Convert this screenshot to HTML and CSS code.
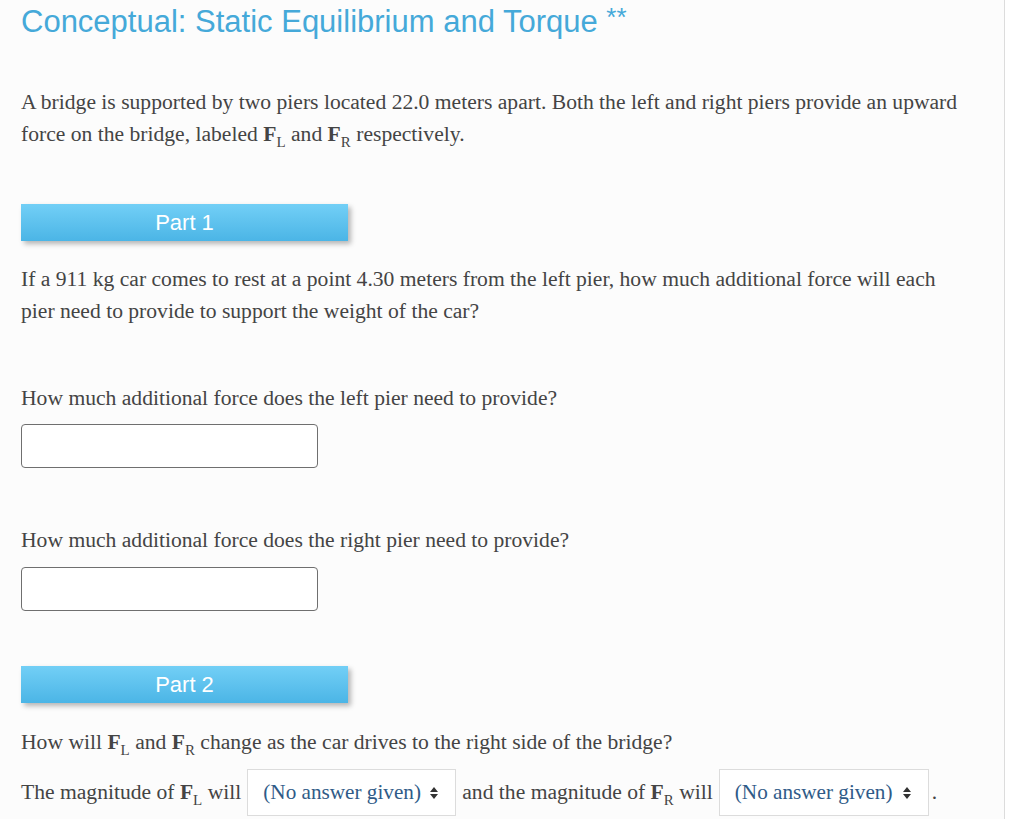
FILE: index.html
```html
<!DOCTYPE html>
<html>
<head>
<meta charset="utf-8">
<link rel="stylesheet" href="styles.css">
</head>
<body>
<div class="page">
  <h1 class="title">Conceptual: Static Equilibrium and Torque <span class="stars">**</span></h1>
  <p class="intro">A bridge is supported by two piers located 22.0 meters apart. Both the left and right piers provide an upward force on the bridge, labeled <b class="vec">F</b><span class="sub">L</span> and <b class="vec">F</b><span class="sub">R</span> respectively.</p>

  <div class="part part1">Part 1</div>
  <p class="q1">If a 911 kg car comes to rest at a point 4.30 meters from the left pier, how much additional force will each pier need to provide to support the weight of the car?</p>

  <p class="q-left">How much additional force does the left pier need to provide?</p>
  <div class="answer a-left"></div>

  <p class="q-right">How much additional force does the right pier need to provide?</p>
  <div class="answer a-right"></div>

  <div class="part part2">Part 2</div>
  <p class="q2">How will <b class="vec">F</b><span class="sub">L</span> and <b class="vec">F</b><span class="sub">R</span> change as the car drives to the right side of the bridge?</p>

  <div class="fill">
    <span class="txt">The magnitude of <b class="vec">F</b><span class="sub">L</span> will</span>
    <div class="select s1"><span>(No answer given)</span><svg class="arrows" width="10" height="14" viewBox="0 0 10 14"><path d="M5 1 L9 6 L1 6 Z M1 8 L9 8 L5 13 Z" fill="#333"/></svg></div>
    <span class="txt">and the magnitude of <b class="vec">F</b><span class="sub">R</span> will</span>
    <div class="select s2"><span>(No answer given)</span><svg class="arrows" width="10" height="14" viewBox="0 0 10 14"><path d="M5 1 L9 6 L1 6 Z M1 8 L9 8 L5 13 Z" fill="#333"/></svg></div>
    <span class="txt dot">.</span>
  </div>
</div>
</body>
</html>
```

FILE: styles.css
```css
html, body {
  margin: 0;
  padding: 0;
  background: #ffffff;
}
.page {
  width: 1005px;
  height: 819px;
  box-sizing: border-box;
  background: #fcfcfc;
  border-right: 1px solid #dcdcdc;
  padding: 5px 0 0 21px;
  overflow: hidden;
  font-family: "Liberation Serif", "Times New Roman", serif;
  color: #444444;
  font-size: 21.6px;
}
.title {
  margin: 0;
  font-family: "Liberation Sans", Arial, sans-serif;
  font-weight: normal;
  font-size: 31px;
  line-height: 34px;
  color: #45a9d9;
}
.stars {
  position: relative;
  top: -6px;
  font-size: 26px;
}
p {
  margin: 0;
  max-width: 945px;
  line-height: 32px;
}
.vec {
  font-weight: bold;
}
.sub {
  font-size: 15px;
  line-height: 0;
  position: relative;
  top: 6px;
}
.intro { margin-top: 46px; }
.part {
  width: 327px;
  height: 37px;
  line-height: 37px;
  text-align: center;
  color: #ffffff;
  font-family: "Liberation Sans", Arial, sans-serif;
  font-size: 22px;
  background: linear-gradient(#72cff6, #4bb5e6);
  box-shadow: 3px 3px 5px rgba(0, 0, 0, 0.28);
}
.part1 { margin-top: 54px; }
.q1 { margin-top: 22px; }
.q-left { margin-top: 55px; }
.answer {
  width: 297px;
  height: 44px;
  box-sizing: border-box;
  background: #ffffff;
  border: 1px solid #6f6f6f;
  border-radius: 4px;
}
.a-left { margin-top: 10px; }
.q-right { margin-top: 56px; }
.a-right { margin-top: 11px; }
.part2 { margin-top: 55px; }
.q2 { margin-top: 23px; }
.fill {
  margin-top: 11px;
  display: flex;
  align-items: center;
  gap: 6px;
}
.select {
  height: 47px;
  box-sizing: border-box;
  background: #ffffff;
  border: 1px solid #dcdcdc;
  display: flex;
  align-items: center;
  justify-content: space-between;
  padding: 0 16px 0 15px;
  color: #2f5b88;
  font-size: 21.2px;
}
.s1 { width: 209px; }
.s2 { width: 210px; }
.arrows { flex: none; }
.dot { margin-left: -3px; }
```
